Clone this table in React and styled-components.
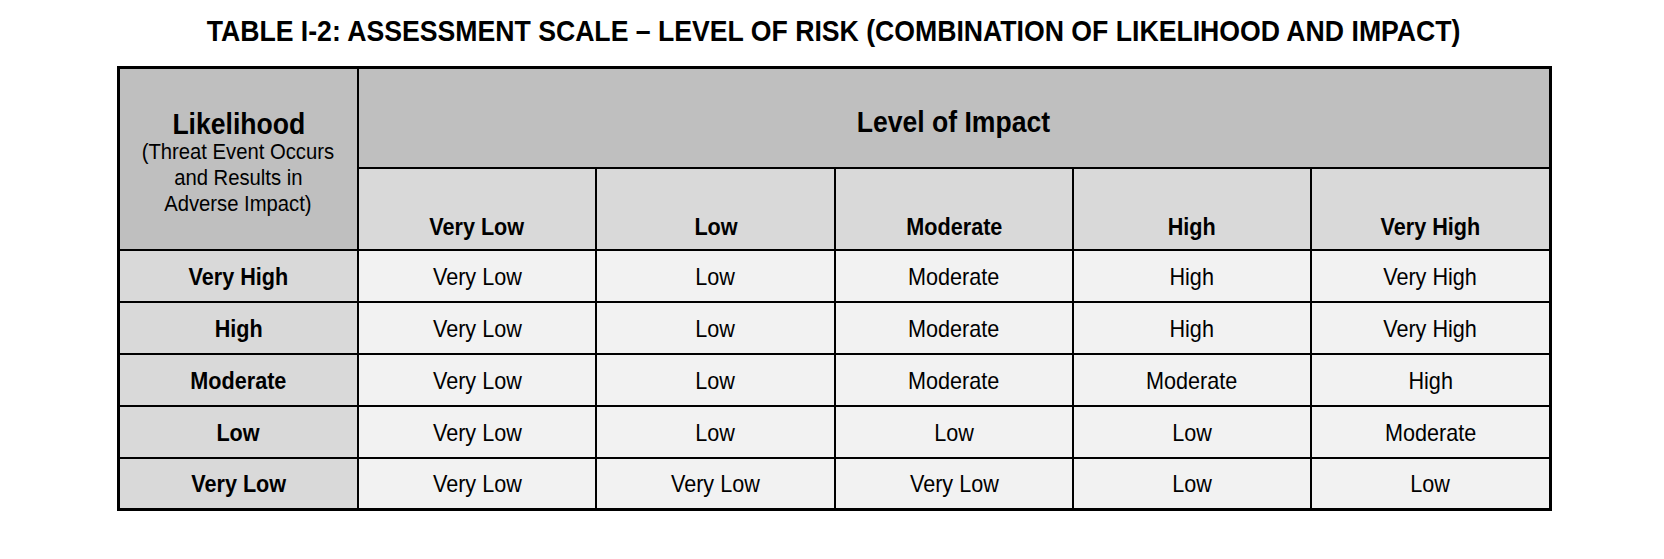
import React from "react";
import styled, { createGlobalStyle } from "styled-components";

const Global = createGlobalStyle`
  html, body { margin: 0; padding: 0; background: #ffffff; }
  body { font-family: "Liberation Sans", Arial, sans-serif; color: #000; }
`;

const Page = styled.div`
  width: 1664px;
  height: 559px;
  display: flex;
  flex-direction: column;
  align-items: center;
  padding: 14px 0 0 4px;
  box-sizing: border-box;
`;

const Title = styled.h1`
  margin: 0 0 19px 0;
  font-family: "Liberation Sans", Arial, sans-serif;
  font-weight: 700;
  font-size: 29.6px;
  line-height: 33px;
  white-space: nowrap;
  text-align: center;
  transform: scaleX(0.9);
`;

const Table = styled.table`
  border-collapse: collapse;
  table-layout: fixed;
  width: 1432px;
  border: 3px solid #000;
  font-family: "Liberation Sans", Arial, sans-serif;
`;

const Col = styled.col`
  width: ${(p) => p.$w}px;
`;

const Cell = styled.td`
  border: 2px solid #000;
  padding: ${(p) => p.$pt || 0}px 0 ${(p) => p.$pb || 0}px 0;
  text-align: center;
  height: ${(p) => p.$h}px;
  background: ${(p) => p.$bg};
  vertical-align: ${(p) => p.$valign || "middle"};
  box-sizing: border-box;
`;

const Text = styled.span`
  display: inline-block;
  transform: scaleX(0.9);
  white-space: nowrap;
  font-size: ${(p) => p.$size || 24}px;
  font-weight: ${(p) => (p.$bold ? 700 : 400)};
  line-height: ${(p) => p.$lh || 28}px;
`;

const Stack = styled.div`
  display: flex;
  flex-direction: column;
  align-items: center;
`;

const widths = [240, 238, 239, 238, 238, 239];
const levels = ["Very Low", "Low", "Moderate", "High", "Very High"];

const rows = [
  ["Very High", ["Very Low", "Low", "Moderate", "High", "Very High"]],
  ["High", ["Very Low", "Low", "Moderate", "High", "Very High"]],
  ["Moderate", ["Very Low", "Low", "Moderate", "Moderate", "High"]],
  ["Low", ["Very Low", "Low", "Low", "Low", "Moderate"]],
  ["Very Low", ["Very Low", "Very Low", "Very Low", "Low", "Low"]],
];

export default function App() {
  return (
    <>
      <Global />
      <Page>
        <Title>
          TABLE I-2: ASSESSMENT SCALE – LEVEL OF RISK (COMBINATION OF LIKELIHOOD AND IMPACT)
        </Title>
        <Table>
          <colgroup>
            {widths.map((w, i) => (
              <Col key={i} $w={w} />
            ))}
          </colgroup>
          <tbody>
            <tr>
              <Cell rowSpan={2} $bg="#bfbfbf" $h={100} $pt={9}>
                <Stack>
                  <Text $size={29.5} $bold $lh={30}>
                    Likelihood
                  </Text>
                  <Text $size={22.5} $lh={26}>
                    (Threat Event Occurs
                  </Text>
                  <Text $size={22.5} $lh={26}>
                    and Results in
                  </Text>
                  <Text $size={22.5} $lh={26}>
                    Adverse Impact)
                  </Text>
                </Stack>
              </Cell>
              <Cell colSpan={5} $bg="#bfbfbf" $h={100} $pt={8}>
                <Text $size={29.5} $bold $lh={32}>
                  Level of Impact
                </Text>
              </Cell>
            </tr>
            <tr>
              {levels.map((l) => (
                <Cell key={l} $bg="#d9d9d9" $h={82} $valign="bottom" $pb={8}>
                  <Text $bold>{l}</Text>
                </Cell>
              ))}
            </tr>
            {rows.map(([label, vals]) => (
              <tr key={label}>
                <Cell $bg="#d9d9d9" $h={52} $pt={2}>
                  <Text $bold>{label}</Text>
                </Cell>
                {vals.map((v, i) => (
                  <Cell key={i} $bg="#f2f2f2" $h={52} $pt={2}>
                    <Text>{v}</Text>
                  </Cell>
                ))}
              </tr>
            ))}
          </tbody>
        </Table>
      </Page>
    </>
  );
}
